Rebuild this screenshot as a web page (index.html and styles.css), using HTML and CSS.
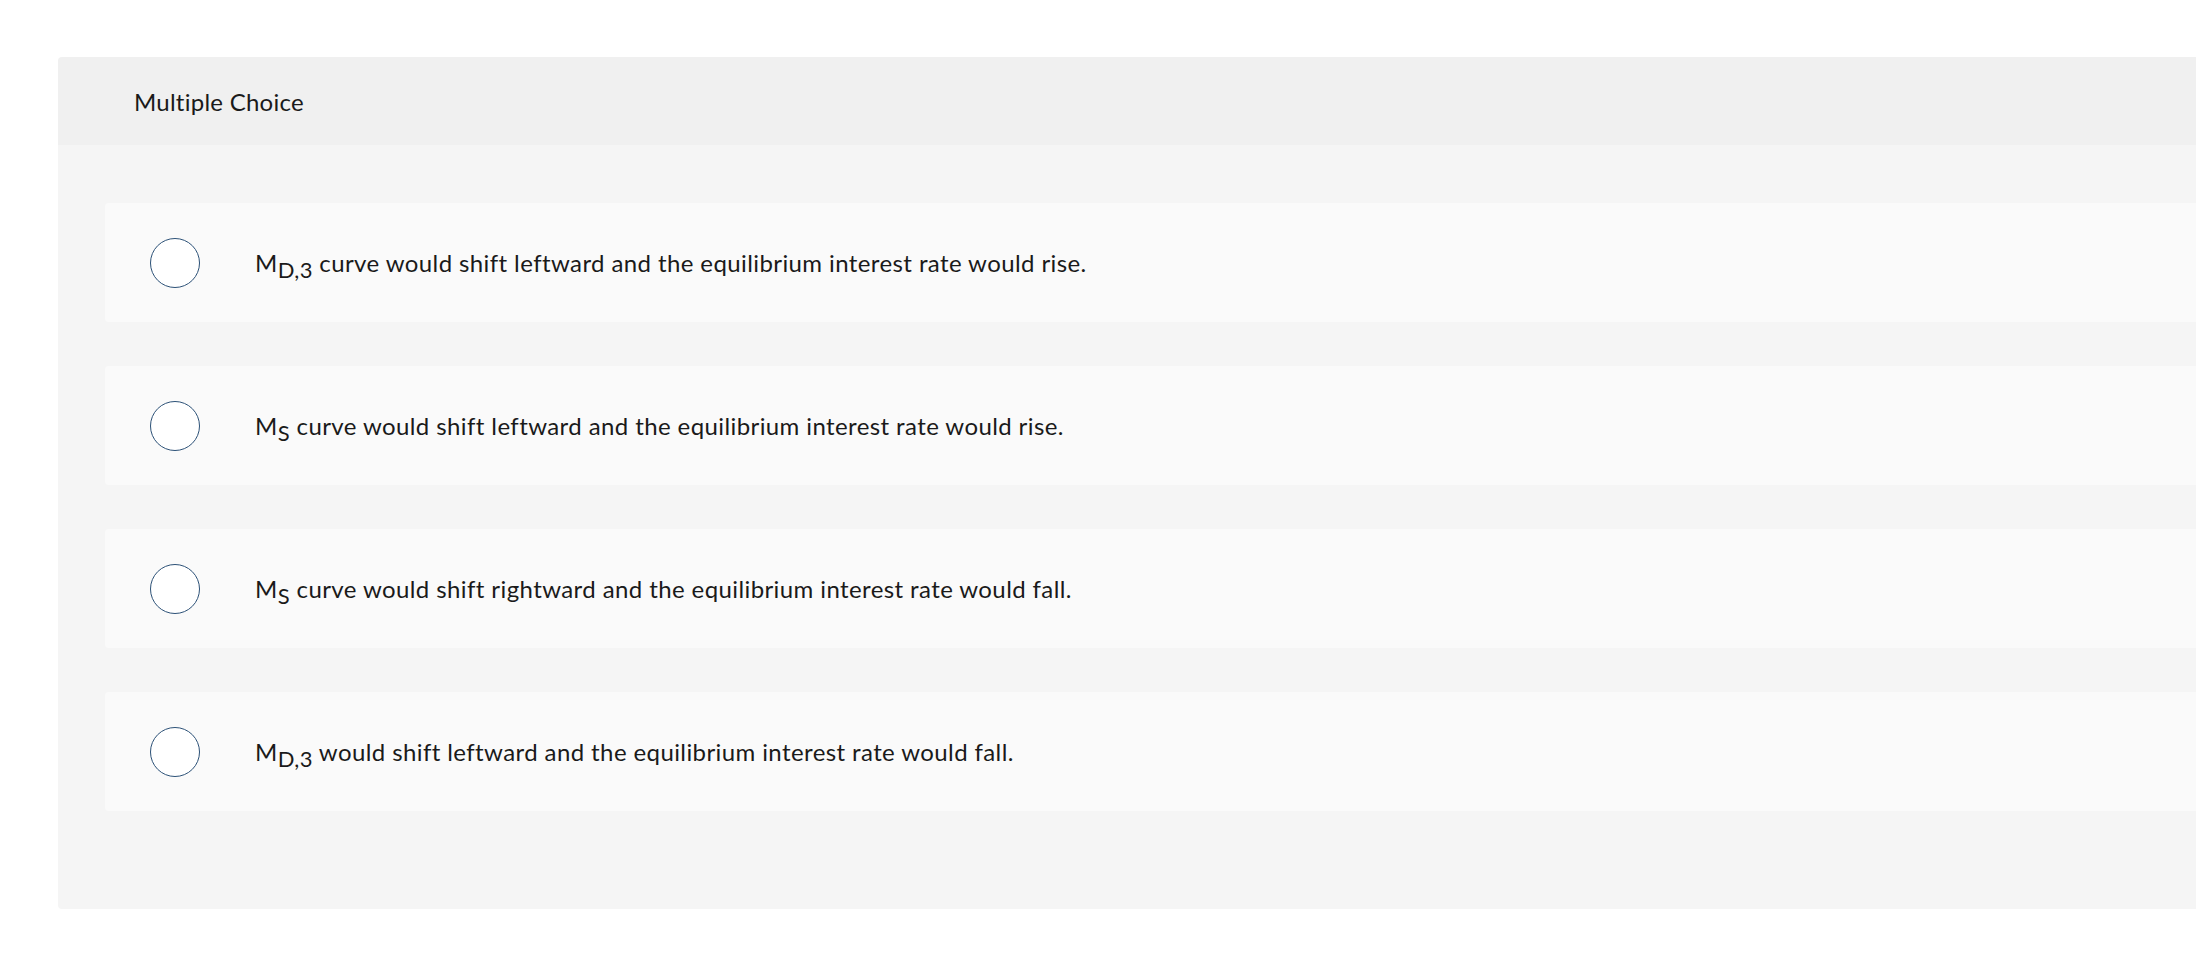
FILE: index.html
```html
<!DOCTYPE html>
<html>
<head>
<meta charset="utf-8">
<link rel="stylesheet" href="styles.css">
</head>
<body>
<div class="card">
  <div class="card-header">Multiple Choice</div>
  <div class="card-body">
    <div class="option"><span class="radio"></span><span class="label">M<sub>D,3</sub> curve would shift leftward and the equilibrium interest rate would rise.</span></div>
    <div class="option"><span class="radio"></span><span class="label">M<sub>S</sub> curve would shift leftward and the equilibrium interest rate would rise.</span></div>
    <div class="option"><span class="radio"></span><span class="label">M<sub>S</sub> curve would shift rightward and the equilibrium interest rate would fall.</span></div>
    <div class="option"><span class="radio"></span><span class="label">M<sub>D,3</sub> would shift leftward and the equilibrium interest rate would fall.</span></div>
  </div>
</div>
</body>
</html>
```

FILE: styles.css
```css
html, body {
  margin: 0;
  padding: 0;
  background: #ffffff;
}
body {
  font-family: Lato, "Open Sans", sans-serif;
  color: #1a1a1a;
  overflow: hidden;
}
.card {
  margin: 57px 0 0 58px;
  border-radius: 4px 0 0 4px;
  overflow: hidden;
}
.card-header {
  background: #f0f0f0;
  height: 88px;
  padding-left: 76px;
  display: flex;
  align-items: center;
  font-size: 24px;
  letter-spacing: 0.25px;
}
.card-body {
  background: #f5f5f5;
  padding: 58px 0 98px 47px;
  display: flex;
  flex-direction: column;
  gap: 44px;
}
.option {
  background: #fafafa;
  height: 119px;
  border-radius: 4px 0 0 4px;
  display: flex;
  align-items: center;
  padding-left: 45px;
}
.radio {
  width: 48px;
  height: 48px;
  border: 1px solid #2c5177;
  border-radius: 50%;
  background: #ffffff;
  flex: none;
}
.label {
  margin-left: 55px;
  font-size: 24px;
  line-height: 30px;
  letter-spacing: 0.4px;
}
.label sub {
  font-size: 22px;
  vertical-align: -6px;
  line-height: 0;
}
```
